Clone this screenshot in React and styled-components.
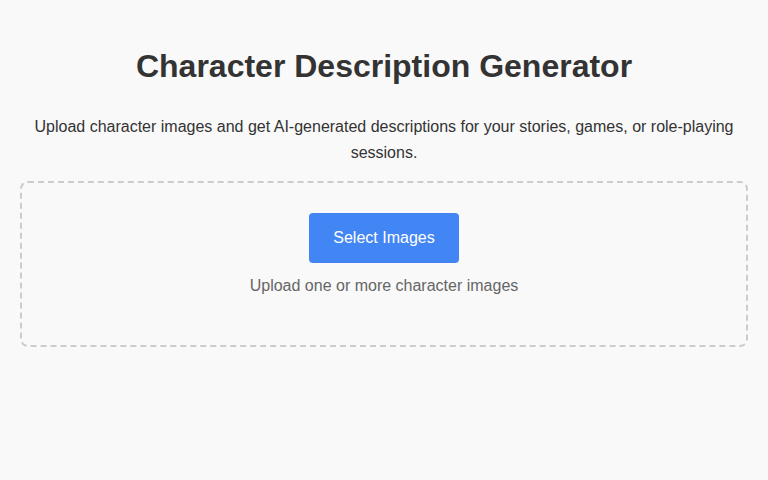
import React from "react";
import styled, { createGlobalStyle } from "styled-components";

const GlobalStyle = createGlobalStyle`
  body {
    margin: 0;
    background: #f9f9f9;
    font-family: "Liberation Sans", Arial, sans-serif;
    line-height: 1.6;
    color: #333;
  }
`;

const Container = styled.div`
  max-width: 800px;
  margin: 0 auto;
  padding: 20px;
`;

const Title = styled.h1`
  font-size: 32px;
  font-weight: bold;
  text-align: center;
  color: #333;
  margin: 21.44px 0;
`;

const Intro = styled.p`
  font-size: 16px;
  text-align: center;
  margin: 16px 0;
`;

const DropZone = styled.div`
  border: 2px dashed #ccc;
  border-radius: 8px;
  padding: 30px;
  display: flex;
  flex-direction: column;
  align-items: center;
`;

const SelectButton = styled.button`
  background: #4285f4;
  color: #fff;
  border: none;
  border-radius: 4px;
  padding: 12px 24px;
  font-family: inherit;
  font-size: 16px;
  line-height: 1.6;
  cursor: pointer;
`;

const Hint = styled.p`
  font-size: 16px;
  color: #666;
  margin: 10px 0 17px;
`;

export default function App() {
  return (
    <>
      <GlobalStyle />
      <Container>
        <Title>Character Description Generator</Title>
        <Intro>
          Upload character images and get AI-generated descriptions for your
          stories, games, or role-playing sessions.
        </Intro>
        <DropZone>
          <SelectButton>Select Images</SelectButton>
          <Hint>Upload one or more character images</Hint>
        </DropZone>
      </Container>
    </>
  );
}
